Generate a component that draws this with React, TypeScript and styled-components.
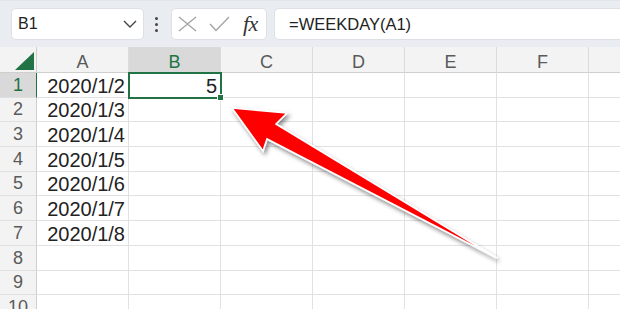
import { FC } from 'react';
import styled, { createGlobalStyle } from 'styled-components';

const GlobalStyle = createGlobalStyle`
  html, body {
    margin: 0;
    padding: 0;
    background: #ffffff;
    overflow: hidden;
  }
  body {
    font-family: 'Liberation Sans', Arial, sans-serif;
  }
`;

const Page = styled.div`
  position: relative;
  width: 620px;
  height: 309px;
  overflow: hidden;
`;

const Toolbar = styled.div`
  display: flex;
  align-items: center;
  height: 47px;
  padding: 0 0 0 11px;
  box-sizing: border-box;
  background: #e9edf1;
  border-top: 1px solid #e2e6ea;
`;

const Box = styled.div`
  display: flex;
  align-items: center;
  height: 32px;
  box-sizing: border-box;
  background: #ffffff;
  border: 1px solid #dde1e5;
  border-radius: 5px;
`;

const NameBox = styled(Box)`
  width: 133px;
  padding: 0 6px 0 6px;
  justify-content: space-between;
  font-size: 16px;
  color: #222;
`;

const Dots = styled.div`
  display: flex;
  flex-direction: column;
  gap: 3px;
  margin: 0 13px 0 11px;
  span {
    width: 3px;
    height: 3px;
    border-radius: 50%;
    background: #444;
  }
`;

const IconBox = styled(Box)`
  width: 96px;
  padding: 0 6px 0 6px;
  gap: 12px;
  margin-right: 7px;
`;

const Fx = styled.span`
  font-family: 'Liberation Serif', 'Times New Roman', serif;
  font-style: italic;
  font-size: 22px;
  color: #333;
  margin-left: 1px;
  letter-spacing: -0.5px;
`;

const FormulaBox = styled(Box)`
  flex: 1;
  padding-left: 14px;
  border-right: none;
  border-radius: 5px 0 0 5px;
  font-size: 16.5px;
  color: #222;
`;

const Sheet = styled.div`
  display: grid;
  grid-template-columns: 37px repeat(7, 92px);
  grid-template-rows: 26px repeat(10, 24.7px);
`;

const Corner = styled.div`
  position: relative;
  background: #f3f3f3;
  border-right: 1px solid #cfcfcf;
  border-bottom: 1px solid #cfcfcf;
  svg {
    position: absolute;
    right: 2px;
    bottom: 2px;
  }
`;

const ColHead = styled.div<{ $selected?: boolean }>`
  display: flex;
  align-items: center;
  justify-content: center;
  box-sizing: border-box;
  background: ${p => (p.$selected ? '#d9d9d9' : '#f3f3f3')};
  color: ${p => (p.$selected ? '#217346' : '#5a5a5a')};
  border-right: 1px solid #dcdcdc;
  border-bottom: 1px solid ${p => (p.$selected ? '#217346' : '#cfcfcf')};
  font-size: 18px;
  padding-top: 5px;
`;

const RowHead = styled.div<{ $selected?: boolean }>`
  display: flex;
  align-items: flex-end;
  justify-content: center;
  box-sizing: border-box;
  padding-bottom: 1px;
  background: ${p => (p.$selected ? '#d9d9d9' : '#f3f3f3')};
  color: ${p => (p.$selected ? '#217346' : '#5a5a5a')};
  border-right: 1px solid ${p => (p.$selected ? '#217346' : '#cfcfcf')};
  border-bottom: 1px solid #e0e0e0;
  font-size: 18px;
`;

const Cell = styled.div<{ $active?: boolean }>`
  position: relative;
  display: flex;
  align-items: flex-end;
  justify-content: flex-end;
  box-sizing: border-box;
  padding: 0 3px 0 0;
  border-right: 1px solid #e1e1e1;
  border-bottom: 1px solid #e1e1e1;
  font-size: 20px;
  line-height: 22px;
  color: #222;
  white-space: nowrap;
  ${p =>
    p.$active &&
    `
    outline: 2px solid #217346;
    outline-offset: -1px;
    z-index: 2;
    &::after {
      content: '';
      position: absolute;
      right: -4px;
      bottom: -4px;
      width: 5px;
      height: 5px;
      background: #217346;
      border: 1px solid #fff;
    }
  `}
`;

const ArrowLayer = styled.svg`
  position: absolute;
  left: 0;
  top: 0;
  pointer-events: none;
  z-index: 5;
`;

const columns = ['A', 'B', 'C', 'D', 'E', 'F', ''];
const dates = ['2020/1/2', '2020/1/3', '2020/1/4', '2020/1/5', '2020/1/6', '2020/1/7', '2020/1/8'];

const Row: FC<{ r: number }> = ({ r }) => (
  <>
    <RowHead $selected={r === 1}>{r}</RowHead>
    {columns.map((c, i) => (
      <Cell key={i} $active={r === 1 && c === 'B'}>
        {c === 'A' ? dates[r - 1] : r === 1 && c === 'B' ? '5' : null}
      </Cell>
    ))}
  </>
);

const App: FC = () => {
  const rows = Array.from({ length: 10 }, (_, i) => i + 1);
  return (
    <Page>
      <GlobalStyle />
      <Toolbar>
        <NameBox>
          <span>B1</span>
          <svg width="14" height="8" viewBox="0 0 14 8">
            <path d="M1 1 L7 7 L13 1" fill="none" stroke="#444" strokeWidth="1.4" />
          </svg>
        </NameBox>
        <Dots>
          <span />
          <span />
          <span />
        </Dots>
        <IconBox>
          <svg width="19" height="16" viewBox="0 0 19 16">
            <path d="M1 1 L18 15 M18 1 L1 15" stroke="#a3a3a3" strokeWidth="1.3" fill="none" />
          </svg>
          <svg width="21" height="16" viewBox="0 0 21 16">
            <path d="M1 8 L7 14.5 L20 1" stroke="#a3a3a3" strokeWidth="1.3" fill="none" />
          </svg>
          <Fx>fx</Fx>
        </IconBox>
        <FormulaBox>=WEEKDAY(A1)</FormulaBox>
      </Toolbar>
      <Sheet>
        <Corner>
          <svg width="19" height="18" viewBox="0 0 19 18">
            <path d="M19 0 L19 18 L0 18 Z" fill="#217346" />
          </svg>
        </Corner>
        {columns.map((c, i) => (
          <ColHead key={i} $selected={c === 'B'}>
            {c}
          </ColHead>
        ))}
        {rows.map(r => (
          <Row key={r} r={r} />
        ))}
      </Sheet>
      <ArrowLayer width="620" height="309" viewBox="0 0 620 309">
        <defs>
          <filter id="shadow" x="-20%" y="-20%" width="140%" height="140%">
            <feDropShadow dx="2" dy="3" stdDeviation="2.2" floodColor="#000" floodOpacity="0.45" />
          </filter>
        </defs>
        <path
          d="M232 108 L287 113 L276 124 L497 258 L267 139 L263 151 Z"
          fill="#ff0000"
          stroke="#ffffff"
          strokeWidth="1.6"
          strokeLinejoin="miter"
          filter="url(#shadow)"
        />
      </ArrowLayer>
    </Page>
  );
};

export default App;
